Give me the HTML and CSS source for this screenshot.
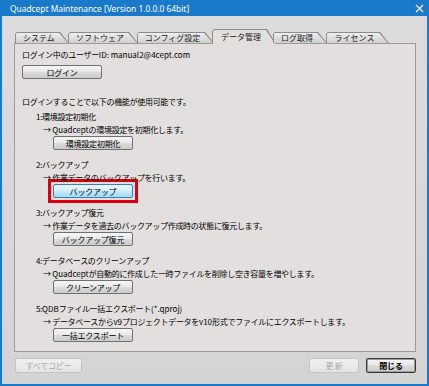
FILE: index.html
```html
<!DOCTYPE html>
<html lang="ja">
<head>
<meta charset="utf-8">
<link rel="stylesheet" href="styles.css">
</head>
<body>
<div class="window">
  <div class="titlebar">
    <span class="title">Quadcept Maintenance [Version 1.0.0.0 64bit]</span>
    <svg class="close" width="9" height="9" viewBox="0 0 9 9"><path d="M1 1L8 8M8 1L1 8" stroke="#fff" stroke-width="1.3"/></svg>
  </div>
  <div class="client">
    <div class="tabs">
      <div class="tab w1"><span>システム</span></div>
      <div class="tab w2"><span>ソフトウェア</span></div>
      <div class="tab w3"><span>コンフィグ設定</span></div>
      <div class="tab w4 active"><span>データ管理</span></div>
      <div class="tab w5"><span>ログ取得</span></div>
      <div class="tab w6"><span>ライセンス</span></div>
    </div>
    <div class="panel">
      <div class="line user">ログイン中のユーザー<span class="lat">ID: manual2@4cept.com</span></div>
      <button class="btn login">ログイン</button>
      <div class="line intro">ログインすることで以下の機能が使用可能です。</div>

      <div class="section">
        <div class="line head">1:環境設定初期化</div>
        <div class="line desc">→ <span class="lat">Quadcept</span>の環境設定を初期化します。</div>
        <button class="btn act">環境設定初期化</button>
      </div>
      <div class="section">
        <div class="line head">2:バックアップ</div>
        <div class="line desc">→ 作業データのバックアップを行います。</div>
        <div class="mark"><button class="btn act hot">バックアップ</button></div>
      </div>
      <div class="section">
        <div class="line head">3:バックアップ復元</div>
        <div class="line desc">→ 作業データを過去のバックアップ作成時の状態に復元します。</div>
        <button class="btn act">バックアップ復元</button>
      </div>
      <div class="section">
        <div class="line head">4:データベースのクリーンアップ</div>
        <div class="line desc">→ <span class="lat">Quadcept</span>が自動的に作成した一時ファイルを削除し空き容量を増やします。</div>
        <button class="btn act">クリーンアップ</button>
      </div>
      <div class="section">
        <div class="line head">5:<span class="lat">QDB</span>ファイル一括エクスポート<span class="lat">(*.qproj)</span></div>
        <div class="line desc">→ データベースから<span class="lat">v9</span>プロジェクトデータを<span class="lat">v10</span>形式でファイルにエクスポートします。</div>
        <button class="btn act">一括エクスポート</button>
      </div>
    </div>
    <div class="footer">
      <button class="btn fbtn copy" disabled>すべてコピー</button>
      <div class="spacer"></div>
      <button class="btn fbtn update" disabled>更 新</button>
      <button class="btn fbtn close-btn">閉じる</button>
    </div>
  </div>
</div>
</body>
</html>
```
FILE: styles.css
```css
* { box-sizing: border-box; }
html, body { margin: 0; padding: 0; }
body {
  width: 429px;
  height: 386px;
  overflow: hidden;
  font-family: "Noto Sans CJK JP", "Noto Sans", sans-serif;
  font-size: 8px;
  color: #000;
  background: #d8d8d8;
}
.window {
  width: 429px;
  height: 386px;
  border: 2px solid #1979ca;
  border-top: 0;
  background: linear-gradient(#dcdcdc, #d4d4d4);
}
.titlebar {
  height: 16px;
  margin: 0 -2px;
  background: #1979ca;
  display: flex;
  align-items: center;
  padding: 0 5px 0 10px;
  color: #fff;
}
.title {
  font-family: "Noto Sans", "DejaVu Sans", sans-serif;
  font-size: 8.4px;
  flex: 1;
}
.close { display: block; margin-top: 1px; }
.client { padding-left: 12px; }
.tabs {
  height: 27px;
  display: flex;
  align-items: flex-end;
  padding-left: 1px;
  position: relative;
  z-index: 2;
}
.tab {
  height: 11px;
  margin-right: -1px;
  background: #8c8c8c;
  clip-path: polygon(0 2px, 2px 0, calc(100% - 9px) 0, 100% 100%, 0 100%);
  position: relative;
  display: flex;
  align-items: center;
  justify-content: center;
  padding-right: 6px;
}
.tab::before {
  content: "";
  position: absolute;
  left: 1px; top: 1px; right: 1px; bottom: 0;
  background: linear-gradient(#eeeeee, #cfcfcf);
  clip-path: polygon(0 1px, 1px 0, calc(100% - 9px) 0, 100% 100%, 0 100%);
}
.tab span { position: relative; line-height: 11px; color: #1a1a1a; }
.tab.active {
  height: 15px;
  margin-bottom: -1px;
}
.tab.active::before {
  background: #e2dfde;
  bottom: 0;
}
.tab.active span { margin-top: -1px; }
.w1 { width: 54px; }
.w2 { width: 70px; }
.w3 { width: 77px; }
.w4 { width: 64px; margin-left: -1px; }
.w5 { width: 54px; margin-left: -2px; }
.w6 { width: 63px; }

.panel {
  width: 402px;
  height: 309px;
  border: 1px solid #9c9c9c;
  background: #e2dfde;
  padding: 5px 7px 0;
  position: relative;
  z-index: 1;
}
.line {
  height: 12px;
  line-height: 12px;
  white-space: nowrap;
  letter-spacing: -0.3px;
}
.lat { letter-spacing: 0; }
.btn {
  display: flex;
  align-items: center;
  justify-content: center;
  height: 14px;
  padding: 0;
  font-family: inherit;
  font-size: 8px;
  letter-spacing: -0.2px;
  color: #000;
  border: 1px solid #707070;
  border-radius: 2px;
  background: linear-gradient(#f6f6f6 0%, #e9e9e9 45%, #d8d8d8 55%, #cdcdcd 100%);
}
.login { width: 80px; margin-top: 4px; }
.intro { margin-top: 17px; }
.section { height: 48px; padding-left: 14px; }
.intro + .section { margin-top: 3px; }
.desc { margin-top: 1px; padding-left: 7px; }
.act { width: 80px; margin-left: 17px; }
.mark {
  width: 90px;
  height: 24px;
  margin: -5px 0 -5px 12px;
  border: 3px solid #dc0010;
  padding: 2px;
}
.mark .act { margin-left: 0; }
.hot {
  border-color: #3c7fb1;
  background: linear-gradient(#eaf6fd 0%, #d9f0fc 45%, #bee6fd 55%, #a7d9f5 100%);
}
.footer {
  display: flex;
  margin-top: 6px;
  width: 402px;
  padding-left: 1px;
}
.spacer { flex: 1; }
.fbtn { height: 15px; }
.copy { width: 67px; }
.update { width: 50px; margin-right: 7px; }
.close-btn { width: 50px; border-color: #3a3a3a; box-shadow: inset 0 0 0 1px #9a9a9a; font-weight: bold; }
.btn:disabled {
  color: #a8a8a8;
  border-color: #c4c4c4;
  background: linear-gradient(#f0f0f0, #e4e4e4);
}
```
